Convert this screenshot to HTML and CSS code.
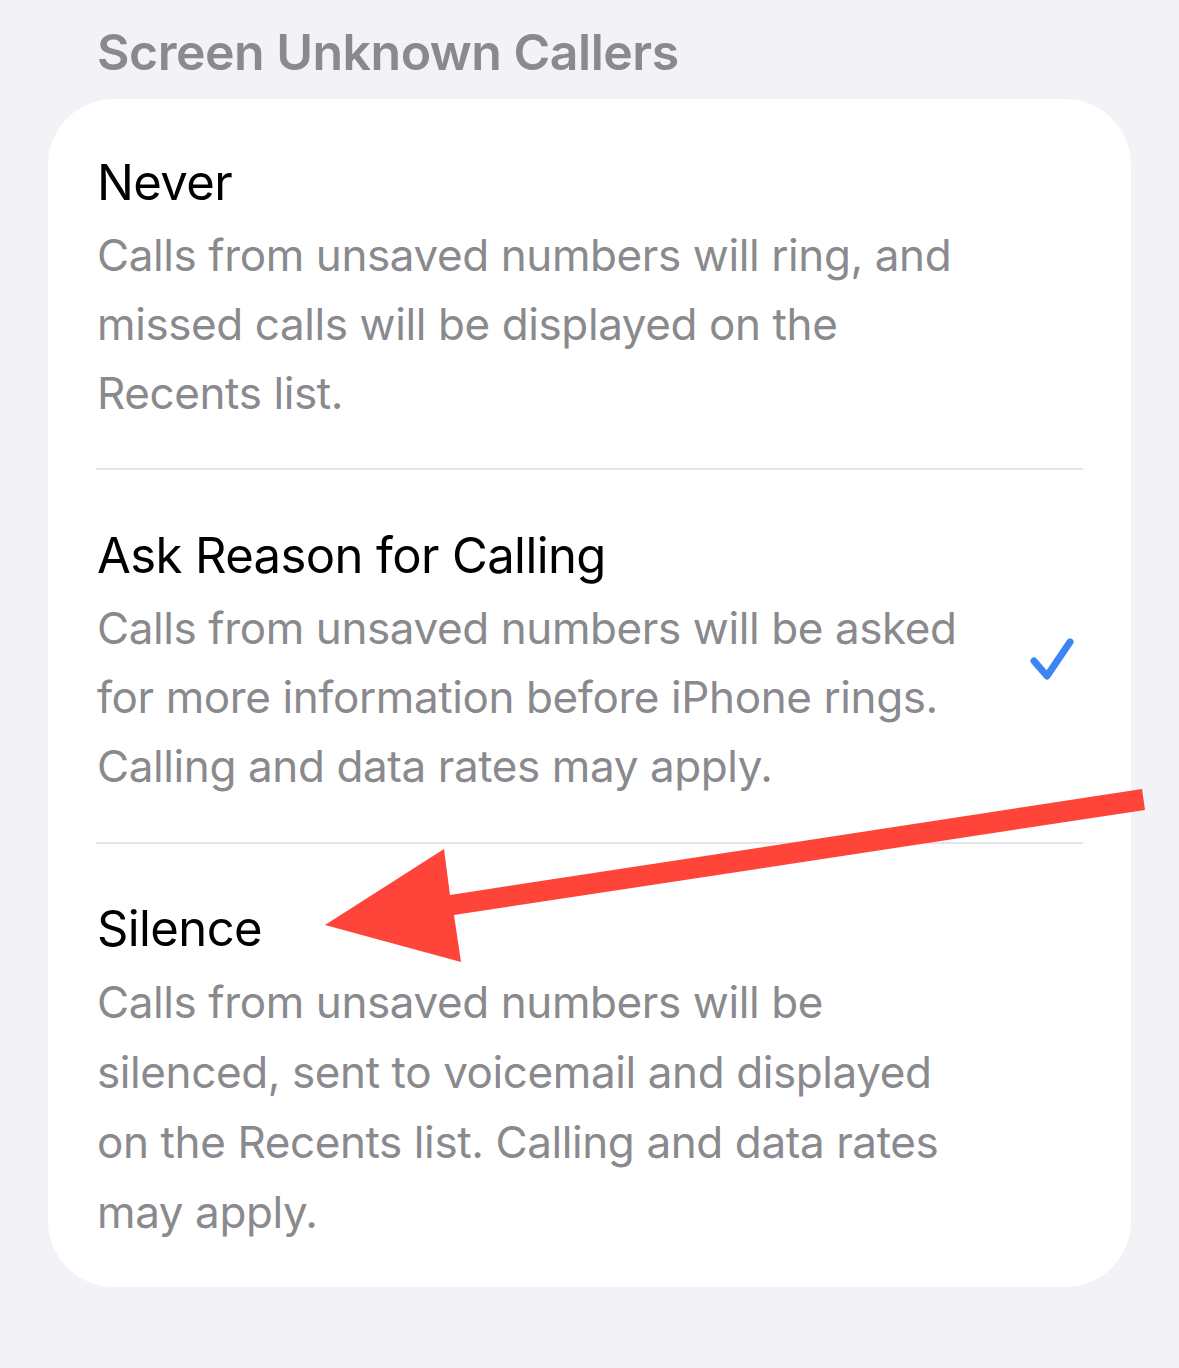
FILE: index.html
```html
<!DOCTYPE html>
<html lang="en">
<head>
  <meta charset="UTF-8" />
  <meta name="viewport" content="width=device-width, initial-scale=1" />
  <title>Screen Unknown Callers</title>
  <link rel="stylesheet" href="styles.css">
</head>
<body>

  <h2 class="section-title">Screen Unknown Callers</h2>

  <div class="card">
    <div class="option">
      <div class="option-text">
        <div class="option-name">Never</div>
        <div class="option-desc">Calls from unsaved numbers will ring, and missed calls will be displayed on the Recents list.</div>
      </div>
    </div>
    <div class="option">
      <div class="option-text">
        <div class="option-name">Ask Reason for Calling</div>
        <div class="option-desc">Calls from unsaved numbers will be asked for more information before iPhone rings. Calling and data rates may apply.</div>
      </div>
      <svg class="check" width="52" height="52" viewBox="0 0 52 52">
        <path d="M7 27 L20 42 L43 8" fill="none" stroke="#3b85f5" stroke-width="7" stroke-linecap="round" stroke-linejoin="round"/>
      </svg>
    </div>
    <div class="option">
      <div class="option-text">
        <div class="option-name">Silence</div>
        <div class="option-desc">Calls from unsaved numbers will be silenced, sent to voicemail and displayed on the Recents list. Calling and data rates may apply.</div>
      </div>
    </div>
  </div>

  <!-- red annotation arrow pointing at "Silence" -->
  <svg class="arrow" width="1179" height="1368" viewBox="0 0 1179 1368">
    <polygon points="1142,789 1145,810 454,915 461,962 325,925 444,849 450,895" fill="#ff4539"/>
  </svg>

</body>
</html>
```

FILE: styles.css
```css
body {
  margin: 0;
  background: #f2f2f7;
  font-family: Inter, "Noto Sans", sans-serif;
  position: relative;
  height: 1368px;
  overflow: hidden;
}
.section-title {
  margin: 0;
  padding: 20px 0 0 97px;
  height: 99px;
  box-sizing: border-box;
  font-size: 50px;
  font-weight: 600;
  line-height: 64px;
  color: #8a8a8e;
  letter-spacing: -0.5px;
}
.card {
  margin-left: 48px;
  width: 1083px;
  box-sizing: border-box;
  background: #fff;
  border-radius: 66px;
  padding: 0 48px;
}
.option {
  display: flex;
  align-items: center;
  padding: 46px 0 40px 1px;
  border-bottom: 2px solid #e6e6ea;
}
.option:nth-child(2) {
  padding-top: 48px;
  padding-bottom: 41px;
}
.option:last-child {
  border-bottom: none;
  padding-top: 47px;
  padding-bottom: 40px;
}
.option:last-child .option-desc {
  line-height: 70px;
}
.option-text {
  flex: 1;
  max-width: 870px;
}
.option-name {
  font-size: 49px;
  line-height: 76px;
  color: #000;
  letter-spacing: -0.6px;
}
.option-desc {
  font-size: 44px;
  line-height: 69px;
  color: #8a8a8e;
  letter-spacing: -0.4px;
}
.check {
  margin-left: auto;
  margin-right: 4px;
}
.arrow {
  position: absolute;
  left: 0;
  top: 0;
}
```
